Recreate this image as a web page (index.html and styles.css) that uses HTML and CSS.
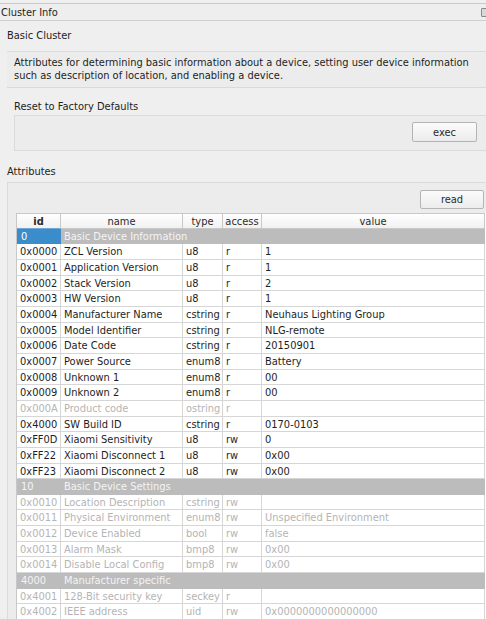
FILE: index.html
```html
<!DOCTYPE html>
<html lang="en">
<head>
    <meta charset="UTF-8">
    <title>Cluster Info</title>
    <link rel="stylesheet" href="styles.css">
</head>
<body>
    <div class="dock">
        <div class="dock-title">
            <span>Cluster Info</span>
            <span class="float-btn"></span>
        </div>
        <div class="content">
            <div class="label">Basic Cluster</div>
            <div class="desc">Attributes for determining basic information about a device, setting user device information such as description of location, and enabling a device.</div>

            <div class="label sub">Reset to Factory Defaults</div>
            <div class="cmd-box">
                <button class="btn btn-exec">exec</button>
            </div>

            <div class="label attr-label">Attributes</div>
            <div class="attr-box">
                <div class="attr-tools">
                    <button class="btn btn-read">read</button>
                </div>
                <div class="grid" id="grid">
                    <div class="hd sorted">id</div>
                    <div class="hd">name</div>
                    <div class="hd">type</div>
                    <div class="hd">access</div>
                    <div class="hd">value</div>
                </div>
            </div>
        </div>
    </div>
    <script>
        const rows = [
            ['group', '0', 'Basic Device Information', 'sel'],
            ['0x0000', 'ZCL Version', 'u8', 'r', '1'],
            ['0x0001', 'Application Version', 'u8', 'r', '1'],
            ['0x0002', 'Stack Version', 'u8', 'r', '2'],
            ['0x0003', 'HW Version', 'u8', 'r', '1'],
            ['0x0004', 'Manufacturer Name', 'cstring', 'r', 'Neuhaus Lighting Group'],
            ['0x0005', 'Model Identifier', 'cstring', 'r', 'NLG-remote'],
            ['0x0006', 'Date Code', 'cstring', 'r', '20150901'],
            ['0x0007', 'Power Source', 'enum8', 'r', 'Battery'],
            ['0x0008', 'Unknown 1', 'enum8', 'r', '00'],
            ['0x0009', 'Unknown 2', 'enum8', 'r', '00'],
            ['0x000A', 'Product code', 'ostring', 'r', '', 'off'],
            ['0x4000', 'SW Build ID', 'cstring', 'r', '0170-0103'],
            ['0xFF0D', 'Xiaomi Sensitivity', 'u8', 'rw', '0'],
            ['0xFF22', 'Xiaomi Disconnect 1', 'u8', 'rw', '0x00'],
            ['0xFF23', 'Xiaomi Disconnect 2', 'u8', 'rw', '0x00'],
            ['group', '10', 'Basic Device Settings'],
            ['0x0010', 'Location Description', 'cstring', 'rw', '', 'off'],
            ['0x0011', 'Physical Environment', 'enum8', 'rw', 'Unspecified Environment', 'off'],
            ['0x0012', 'Device Enabled', 'bool', 'rw', 'false', 'off'],
            ['0x0013', 'Alarm Mask', 'bmp8', 'rw', '0x00', 'off'],
            ['0x0014', 'Disable Local Config', 'bmp8', 'rw', '0x00', 'off'],
            ['group', '4000', 'Manufacturer specific'],
            ['0x4001', '128-Bit security key', 'seckey', 'r', '', 'off'],
            ['0x4002', 'IEEE address', 'uid', 'rw', '0x0000000000000000', 'off']
        ];

        const grid = document.getElementById('grid');
        rows.forEach(row => {
            if (row[0] === 'group') {
                const id = document.createElement('div');
                id.className = 'cell grp' + (row[3] === 'sel' ? ' sel' : '');
                id.textContent = row[1];
                const title = document.createElement('div');
                title.className = 'cell grp grp-title';
                title.textContent = row[2];
                grid.appendChild(id);
                grid.appendChild(title);
                return;
            }
            const off = row[5] === 'off';
            for (let i = 0; i < 5; i++) {
                const cell = document.createElement('div');
                cell.className = 'cell' + (off ? ' off' : '');
                cell.textContent = row[i];
                grid.appendChild(cell);
            }
        });
    </script>
</body>
</html>
```

FILE: styles.css
```css
html, body {
    margin: 0;
    padding: 0;
    height: 100%;
    overflow: hidden;
}
body {
    font-family: "DejaVu Sans", sans-serif;
    font-size: 9.9px;
    color: #1e1e1e;
    background-color: #efefef;
}
.dock {
    padding-top: 3px;
}
.dock-title {
    display: flex;
    justify-content: space-between;
    align-items: center;
    height: 16px;
    padding-left: 1px;
    border-top: 1px solid #c9c9c9;
    border-bottom: 1px solid #cfcfcf;
    background-color: #eeeeee;
}
.float-btn {
    width: 6px;
    height: 7px;
    margin-right: -3px;
    border: 1px solid #8a8a8a;
    border-radius: 1px;
    background-color: #d8d8d8;
}
.content {
    padding-left: 7px;
}
.label {
    height: 13px;
    line-height: 13px;
}
.content > .label:first-child {
    margin-top: 8px;
}
.desc {
    margin-top: 9px;
    padding: 4px 7px 5px 7px;
    min-height: 26px;
    line-height: 13px;
    border-top: 1px solid #dadada;
    border-bottom: 1px solid #dadada;
    background-color: #ececec;
}
.label.sub {
    margin-top: 12px;
    margin-left: 7px;
}
.cmd-box {
    display: flex;
    justify-content: flex-end;
    align-items: flex-start;
    height: 36px;
    margin-top: 2px;
    margin-left: 7px;
    padding-top: 6px;
    padding-right: 9px;
    box-sizing: border-box;
    border: 1px solid #dadada;
    border-right: none;
    background-color: #ececec;
}
.attr-label {
    margin-top: 14px;
}
.attr-box {
    margin-top: 4px;
    padding: 7px 2px 0 8px;
    border-top: 1px solid #dadada;
    border-left: 1px solid #dadada;
    background-color: #ececec;
    height: 500px;
}
.attr-tools {
    display: flex;
    justify-content: flex-end;
}
.btn {
    font-family: "DejaVu Sans", sans-serif;
    font-size: 9.9px;
    color: #2a2a2a;
    border: 1px solid #b4b4b4;
    border-radius: 2px;
    background: linear-gradient(#fbfbfb, #ececec);
    padding: 0;
}
.btn-exec {
    width: 65px;
    height: 20px;
}
.btn-read {
    width: 64px;
    height: 19px;
}
.grid {
    display: grid;
    grid-template-columns: 44px 122px 40px 39px 223px;
    grid-auto-rows: 15.66px;
    margin-top: 4px;
    width: 469px;
    border-left: 1px solid #c8c8c8;
    background-color: #ffffff;
}
.hd {
    height: 16px;
    line-height: 15px;
    text-align: center;
    box-sizing: border-box;
    border-top: 1px solid #c8c8c8;
    border-right: 1px solid #c8c8c8;
    border-bottom: 1px solid #c8c8c8;
    background: linear-gradient(#ffffff, #f1f1f1);
    color: #2a2a2a;
}
.hd.sorted {
    font-weight: bold;
    border-bottom: 1px solid #6fa8d8;
}
.cell {
    padding-left: 3px;
    line-height: 15px;
    white-space: nowrap;
    overflow: hidden;
    box-sizing: border-box;
    border-right: 1px solid #d6d6d6;
    border-bottom: 1px solid #d6d6d6;
    color: #1e1e1e;
}
.cell.off {
    color: #b4b4b4;
}
.cell.grp {
    background-color: #bcbcbc;
    color: #f4f4f4;
    border-right: none;
    border-bottom: none;
    padding-left: 4px;
}
.cell.grp-title {
    grid-column: 2 / 6;
    padding-left: 3px;
    border-right: 1px solid #bcbcbc;
}
.cell.sel {
    background-color: #3a8ccb;
    color: #ffffff;
}
```
